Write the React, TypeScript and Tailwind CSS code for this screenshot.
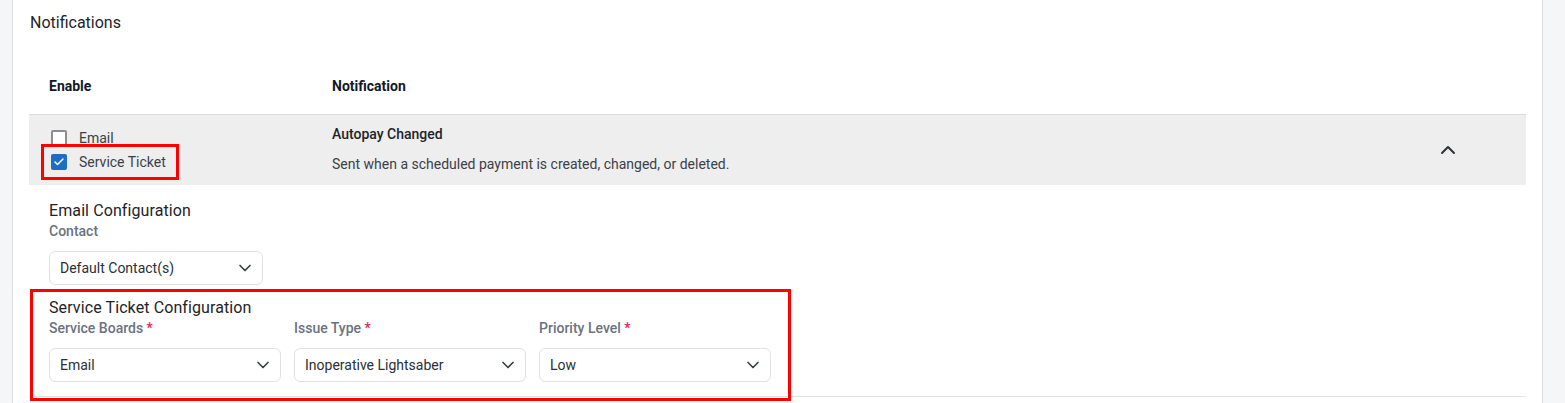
import { Check, ChevronDown, ChevronUp } from 'lucide-react';

function Checkbox({ checked }: { checked?: boolean }) {
  if (checked) {
    return (
      <span className="w-4 h-4 rounded-[2px] bg-[#1b6ec2] flex items-center justify-center flex-shrink-0">
        <Check size={12} strokeWidth={3} className="text-white" />
      </span>
    );
  }
  return <span className="w-4 h-4 rounded-[2px] border-2 border-[#8d8d8d] bg-white flex-shrink-0" />;
}

function Select({ value, width }: { value: string; width: string }) {
  return (
    <div
      className={`${width} h-[34px] rounded-md border border-[#e2e2e2] bg-white flex items-center pl-[10px] pr-[7px]`}
    >
      <span className="flex-1 text-sm text-[#2b2f36]">{value}</span>
      <ChevronDown size={20} strokeWidth={2} className="text-[#3a3f47]" />
    </div>
  );
}

function Field({ label, value }: { label: string; value: string }) {
  return (
    <div className="w-[232px]">
      <p className="text-sm leading-5 font-medium text-[#6b7280]">
        {label} <span className="text-[#e0245e]">*</span>
      </p>
      <div className="mt-[10px]">
        <Select value={value} width="w-[232px]" />
      </div>
    </div>
  );
}

export default function App() {
  return (
    <div className="min-h-[403px] bg-[#f5f6f8] flex pl-3 pr-[22px]" style={{ fontFamily: 'Roboto, "Open Sans", sans-serif' }}>
      <div className="flex-1 bg-white border-x border-[#dcdde0] px-4 pt-[13px]">
        <h2 className="text-base leading-5 text-[#1f2328] pl-px">Notifications</h2>

        {/* table header */}
        <div className="flex pt-[43px] pb-[18px] text-sm leading-5 font-bold text-[#111827]">
          <div className="w-[303px] pl-5">Enable</div>
          <div className="flex-1">Notification</div>
        </div>

        {/* notification row */}
        <div className="border-t border-[#dedede] bg-[#eeeeee] flex items-center h-[71px]">
          <div className="w-[303px] pl-5 py-[11px] self-start">
            <label className="h-6 flex items-center gap-3 pl-0.5 text-sm text-[#3b4149]">
              <Checkbox />
              Email
            </label>
            <div className="relative">
              <label className="h-6 flex items-center gap-3 pl-0.5 text-sm text-[#3b4149]">
                <Checkbox checked />
                Service Ticket
              </label>
              <span className="absolute left-[-8px] top-[-6px] w-[138px] h-[36px] border-[3px] border-[#ff0000] pointer-events-none" />
            </div>
          </div>
          <div className="flex-1 self-start pt-[9px]">
            <p className="text-sm leading-5 font-medium text-[#1f2328]">Autopay Changed</p>
            <p className="mt-[10px] text-sm leading-5 text-[#3b4149]">
              Sent when a scheduled payment is created, changed, or deleted.
            </p>
          </div>
          <div className="pr-[66px]">
            <ChevronUp size={24} strokeWidth={2} className="text-[#2f3338]" />
          </div>
        </div>

        {/* expanded config */}
        <div className="pl-5 pt-4 pb-[14px] border-b border-[#e4e4e4]">
          <h3 className="text-base leading-5 tracking-[0.1px] text-[#1f2328]">Email Configuration</h3>
          <p className="text-sm leading-5 font-medium text-[#6b7280]">Contact</p>
          <div className="mt-[10px]">
            <Select value="Default Contact(s)" width="w-[214px]" />
          </div>

          <div className="relative mt-[13px]">
            <h3 className="text-base leading-5 tracking-[0.1px] text-[#1f2328]">Service Ticket Configuration</h3>
            <div className="flex gap-[13px]">
              <Field label="Service Boards" value="Email" />
              <Field label="Issue Type" value="Inoperative Lightsaber" />
              <Field label="Priority Level" value="Low" />
            </div>
            <span className="absolute left-[-19px] top-[-9px] w-[761px] h-[112px] border-[3px] border-[#ff0000] pointer-events-none" />
          </div>
        </div>
      </div>
    </div>
  );
}
